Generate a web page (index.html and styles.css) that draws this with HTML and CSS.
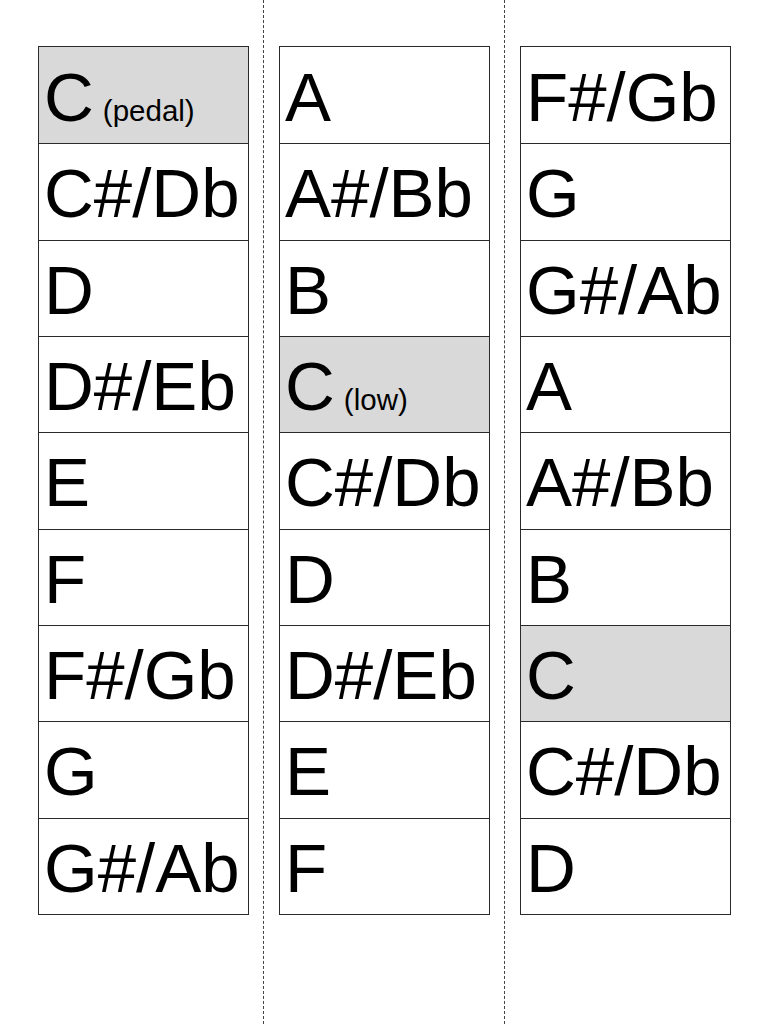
FILE: index.html
```html
<!DOCTYPE html>
<html>
<head>
<meta charset="utf-8">
<link rel="stylesheet" href="styles.css">
</head>
<body>
<div class="page">
  <div class="col">
    <div class="cell shade">C<span class="sub">(pedal)</span></div>
    <div class="cell">C#/Db</div>
    <div class="cell">D</div>
    <div class="cell">D#/Eb</div>
    <div class="cell">E</div>
    <div class="cell">F</div>
    <div class="cell">F#/Gb</div>
    <div class="cell">G</div>
    <div class="cell">G#/Ab</div>
  </div>
  <div class="cut"></div>
  <div class="col">
    <div class="cell">A</div>
    <div class="cell">A#/Bb</div>
    <div class="cell">B</div>
    <div class="cell shade">C<span class="sub">(low)</span></div>
    <div class="cell">C#/Db</div>
    <div class="cell">D</div>
    <div class="cell">D#/Eb</div>
    <div class="cell">E</div>
    <div class="cell">F</div>
  </div>
  <div class="cut"></div>
  <div class="col">
    <div class="cell">F#/Gb</div>
    <div class="cell">G</div>
    <div class="cell">G#/Ab</div>
    <div class="cell">A</div>
    <div class="cell">A#/Bb</div>
    <div class="cell">B</div>
    <div class="cell shade">C</div>
    <div class="cell">C#/Db</div>
    <div class="cell">D</div>
  </div>
</div>
</body>
</html>
```
FILE: styles.css
```css
html, body {
  margin: 0;
  padding: 0;
  background: #fff;
}
.page {
  display: flex;
  align-items: flex-start;
  height: 1024px;
  padding-left: 38px;
  box-sizing: border-box;
  font-family: "Liberation Sans", Arial, sans-serif;
  color: #000;
}
.col {
  margin-top: 46px;
  width: 211px;
  height: 869px;
  box-sizing: border-box;
  border: 1px solid #2a2a2a;
  display: flex;
  flex-direction: column;
}
.cut {
  width: 0;
  height: 1024px;
  border-left: 1px dashed #444;
  margin: 0 15px 0 14px;
}
.cell {
  flex: 1;
  border-top: 1px solid #2a2a2a;
  padding: 10px 0 0 5px;
  font-size: 69px;
  line-height: 80px;
  white-space: nowrap;
  overflow: hidden;
}
.cell:first-child {
  border-top: none;
  padding-top: 11px;
}
.shade {
  background: #d9d9d9;
}
.sub {
  font-size: 29.5px;
  margin-left: 9px;
}
```
